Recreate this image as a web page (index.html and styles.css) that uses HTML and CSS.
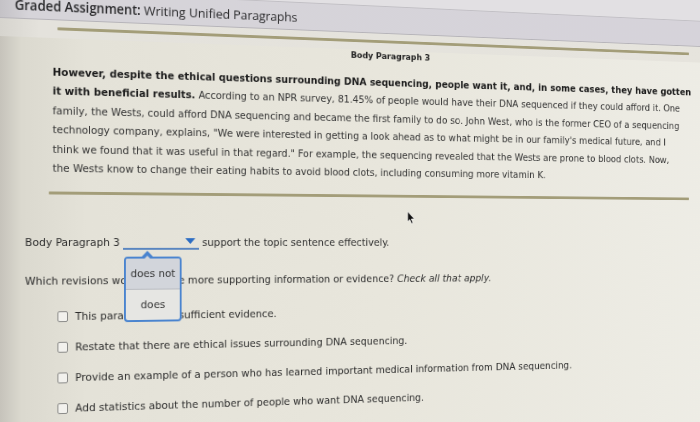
FILE: index.html
```html
<!DOCTYPE html>
<html lang="en">
<head>
<meta charset="utf-8">
<title>Graded Assignment: Writing Unified Paragraphs</title>
<link rel="stylesheet" href="styles.css">
</head>
<body>
<div class="page">
  <div class="top-strip"></div>
  <header class="title-bar">
    <h1 class="title"><span class="title-strong">Graded Assignment:</span> Writing Unified Paragraphs</h1>
  </header>
  <div class="rule-strip"><div class="rule rule-top"></div></div>

  <section class="content">
    <h2 class="para-heading">Body Paragraph 3</h2>
    <p class="para"><strong>However, despite the ethical questions surrounding DNA sequencing, people want it, and, in some cases, they have gotten<br>it with beneficial results.</strong> According to an NPR survey, 81.45% of people would have their DNA sequenced if they could afford it. One<br>family, the Wests, could afford DNA sequencing and became the first family to do so. John West, who is the former CEO of a sequencing<br>technology company, explains, "We were interested in getting a look ahead as to what might be in our family's medical future, and I<br>think we found that it was useful in that regard." For example, the sequencing revealed that the Wests are prone to blood clots. Now,<br>the Wests know to change their eating habits to avoid blood clots, including consuming more vitamin K.</p>
    <div class="rule rule-bottom"></div>
  </section>

  <section class="questions">
    <div class="q1">
      <span>Body Paragraph 3</span>
      <div class="dropdown">
        <svg class="caret" width="11" height="6" viewBox="0 0 11 6"><path d="M0 0 H11 L5.5 6 Z" fill="#2c6dc3"/></svg>
        <div class="menu">
          <div class="menu-item menu-item-active">does not</div>
          <div class="menu-item">does</div>
        </div>
      </div>
      <span>support the topic sentence effectively.</span>
    </div>
    <p class="q2">Which revisions would provide more supporting information or evidence? <em>Check all that apply.</em></p>
    <ul class="options">
      <li class="option"><span class="box"></span>This paragraph has sufficient evidence.</li>
      <li class="option"><span class="box"></span>Restate that there are ethical issues surrounding DNA sequencing.</li>
      <li class="option"><span class="box"></span>Provide an example of a person who has learned important medical information from DNA sequencing.</li>
      <li class="option"><span class="box"></span>Add statistics about the number of people who want DNA sequencing.</li>
    </ul>
  </section>

  <svg class="cursor" width="10" height="15" viewBox="0 0 10 15"><path d="M1 1 L1 12 L3.6 9.6 L5.6 14 L7.2 13.3 L5.3 9 L8.8 9 Z" fill="#111" stroke="#fff" stroke-width="0.6"/></svg>
</div>
</body>
</html>
```

FILE: styles.css
```css
html, body {
  margin: 0;
  padding: 0;
  width: 700px;
  height: 422px;
  overflow: hidden;
}

body {
  background: #dddbd3;
  font-family: "DejaVu Sans", Verdana, sans-serif;
  color: #2e2e2e;
}

.page {
  position: relative;
  width: 860px;
  height: 540px;
  margin-top: -40px;
  transform-origin: 0 283px;
  transform: perspective(1000px) rotateY(10.4deg);
  background: linear-gradient(to right, #c6c3bb 0px, #dbd9cf 22px, #e4e2d8 90px, #e8e6dc 420px, #eeede6 860px);
}

.top-strip {
  height: 28px;
  background: #e2e0e3;
  border-bottom: 1px solid #c2c0c5;
}

.title-bar {
  height: 28px;
  padding-left: 15px;
  background: linear-gradient(to right, #c4c2c6 0px, #d6d4d9 30px, #d6d3da 100%);
  border-bottom: 1px solid #b6b4b9;
}

.title {
  margin: 0;
  padding-top: 7px;
  font-family: "Open Sans", "DejaVu Sans", sans-serif;
  font-size: 13.5px;
  line-height: 16px;
  font-weight: 400;
  color: #2a2a2c;
  white-space: nowrap;
}

.title-strong {
  font-weight: 600;
}

.rule-strip {
  height: 11px;
  padding-top: 7px;
  background: linear-gradient(to right, #d6d4ce 0px, #e4e2dc 40px, #e6e4dd 100%);
}

.rule {
  height: 3px;
  background: #a39d79;
  border-radius: 1px;
}

.rule-top {
  margin-left: 59px;
  width: 743px;
}

.content {
  padding-left: 54px;
  width: 748px;
}

.para-heading {
  margin: 0;
  font-size: 9.3px;
  line-height: 12px;
  font-weight: bold;
  text-align: center;
  color: #222;
}

.para {
  margin: 13px 0 0;
  font-size: 10.8px;
  line-height: 19.4px;
  color: #333;
  white-space: nowrap;
}

.para strong {
  color: #1c1c1c;
}

.rule-bottom {
  margin: 14px 0 0 -4px;
  width: 752px;
}

.questions {
  padding-left: 25.6px;
  font-size: 11.1px;
  color: #2c2c2c;
}

.q1 {
  margin-top: 38px;
  height: 20px;
  display: flex;
  align-items: center;
  white-space: nowrap;
}

.dropdown {
  position: relative;
  width: 82px;
  height: 14px;
  margin: 0 3.5px;
  border-bottom: 2px solid #5a86c0;
  display: flex;
  justify-content: flex-end;
  align-items: center;
}

.caret {
  display: block;
  margin-right: 4px;
}

.menu {
  position: absolute;
  left: 1px;
  top: 23px;
  width: 58px;
  border: 2px solid #4a84cf;
  border-radius: 4px;
  background: #e6e6e3;
  z-index: 2;
}

.menu::before {
  content: "";
  position: absolute;
  left: 17px;
  top: -8px;
  border-left: 6px solid transparent;
  border-right: 6px solid transparent;
  border-bottom: 6px solid #4a84cf;
}

.menu::after {
  content: "";
  position: absolute;
  left: 20px;
  top: -3px;
  border-left: 3px solid transparent;
  border-right: 3px solid transparent;
  border-bottom: 3px solid #d2d5db;
}

.menu-item {
  height: 31px;
  display: flex;
  align-items: center;
  justify-content: center;
  color: #333;
}

.menu-item-active {
  background: #d2d5db;
  border-bottom: 1px solid #b8bbc1;
  border-radius: 2px 2px 0 0;
}

.q2 {
  margin: 19.4px 0 0;
  line-height: 20px;
  white-space: nowrap;
}

.options {
  list-style: none;
  margin: 15.5px 0 0;
  padding: 0 0 0 33.3px;
  display: flex;
  flex-direction: column;
  gap: 11px;
}

.option {
  height: 20px;
  display: flex;
  align-items: center;
  white-space: nowrap;
}

.box {
  width: 9px;
  height: 9px;
  margin-right: 7.6px;
  border: 1px solid #8a8a88;
  border-radius: 2px;
  background: #f2f1ed;
  flex: none;
}

.cursor {
  position: absolute;
  left: 447px;
  top: 248px;
}
```
